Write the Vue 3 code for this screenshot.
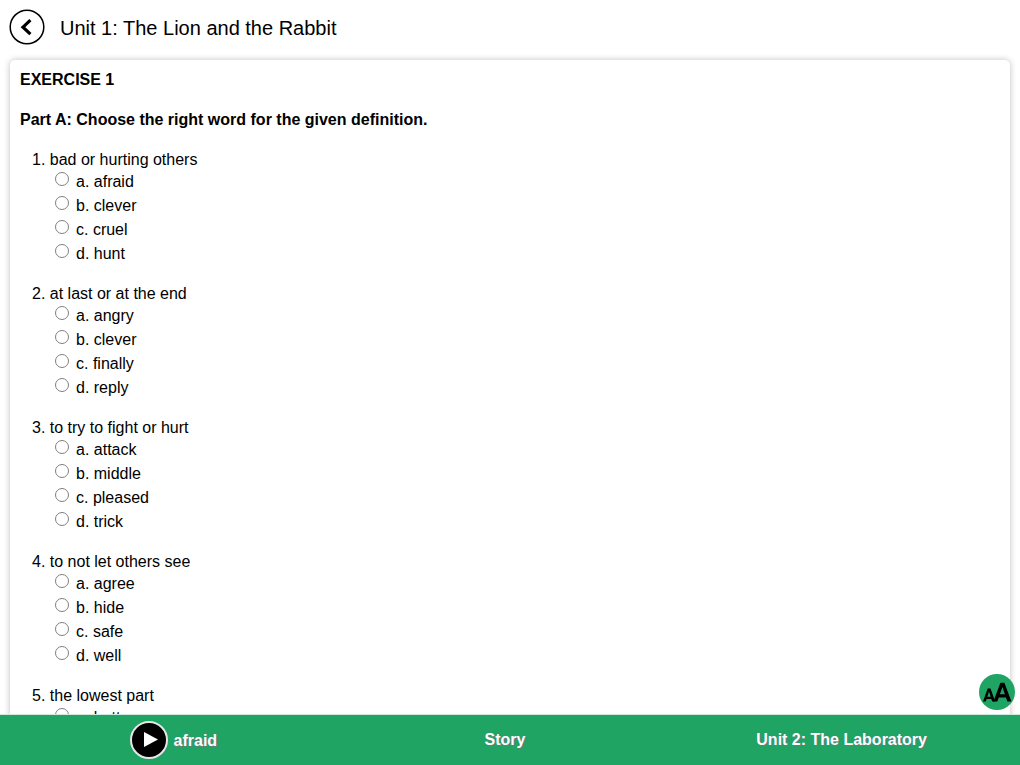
<script setup>
import { reactive } from 'vue'

const questions = [
  { text: 'bad or hurting others', options: ['afraid', 'clever', 'cruel', 'hunt'] },
  { text: 'at last or at the end', options: ['angry', 'clever', 'finally', 'reply'] },
  { text: 'to try to fight or hurt', options: ['attack', 'middle', 'pleased', 'trick'] },
  { text: 'to not let others see', options: ['agree', 'hide', 'safe', 'well'] },
  { text: 'the lowest part', options: ['bottom'] }
]
const letters = 'abcd'
const answers = reactive({})
</script>

<template>
  <div class="page">
    <header class="top">
      <button class="back" type="button" aria-label="Back">
        <svg viewBox="0 0 36 36" width="36" height="36">
          <circle cx="18" cy="18" r="16.8" fill="#fff" stroke="#000" stroke-width="1.5" />
          <path d="M21.4 11.2 14 18.2l7.4 7" fill="none" stroke="#000" stroke-width="3.2" />
        </svg>
      </button>
      <h1>Unit 1: The Lion and the Rabbit</h1>
    </header>

    <main class="content">
      <section class="card">
        <h2>EXERCISE 1</h2>
        <h3>Part A: Choose the right word for the given definition.</h3>
        <ol class="questions">
          <li v-for="(q, i) in questions" :key="i" class="question">
            <p class="prompt">{{ i + 1 }}. {{ q.text }}</p>
            <label v-for="(o, j) in q.options" :key="j" class="option">
              <input v-model="answers[i]" type="radio" :name="'q' + i" :value="o" />
              <span>{{ letters[j] }}. {{ o }}</span>
            </label>
          </li>
        </ol>
      </section>
    </main>

    <button class="size" type="button" aria-label="Text size">
      <svg viewBox="0 0 36 36" width="36" height="36">
        <circle cx="18" cy="18" r="18" fill="#1fa463" />
        <g fill="#000" fill-rule="evenodd">
          <path d="M4 27.6 8.7 14.6h2.8L16.2 27.6h-3l-.9-2.6H7.6l-.9 2.6zM8.3 22.8h3.4L10 17.6z" />
          <path d="M14.4 27.6 21.4 8.8h4l7 18.8h-4l-1.5-4.2h-7.1l-1.5 4.2zM20.9 20.2h5l-2.5-7.2z" />
        </g>
      </svg>
    </button>

    <footer class="bar">
      <a class="audio" href="#">
        <svg viewBox="0 0 38 38" width="38" height="38">
          <circle cx="19" cy="19" r="18" fill="#000" stroke="#e6e6e6" stroke-width="2" />
          <path d="M14 11v15L28 18.5z" fill="#fff" />
        </svg>
        <span>afraid</span>
      </a>
      <a href="#">Story</a>
      <a href="#">Unit 2: The Laboratory</a>
    </footer>
  </div>
</template>

<style>
body {
  margin: 0;
  background: #fff;
}
</style>

<style scoped>
.page {
  display: flex;
  flex-direction: column;
  height: 100vh;
  overflow: hidden;
  font-family: "Liberation Sans", Arial, sans-serif;
  font-size: 16px;
  line-height: 20px;
  color: #000;
}
.top {
  display: flex;
  align-items: center;
  gap: 15px;
  height: 54px;
  flex: none;
  padding: 0 9px;
}
button {
  display: block;
  padding: 0;
  border: 0;
  background: none;
  cursor: pointer;
}
svg {
  display: block;
}
h1 {
  margin: 0;
  padding-top: 2px;
  font-size: 20px;
  line-height: 24px;
  font-weight: 400;
}
.content {
  flex: 1;
  min-height: 0;
  overflow: hidden;
  padding: 6px 10px 0;
}
.card {
  padding: 10px;
  border-radius: 5px;
  background: #fff;
  box-shadow: 0 0 6px rgba(0, 0, 0, 0.25);
}
h2,
h3 {
  margin: 0 0 20px;
  font-size: 16px;
  line-height: 20px;
  font-weight: 700;
}
.questions {
  margin: 0;
  padding: 0;
  list-style: none;
}
.question {
  padding-left: 12px;
  margin-bottom: 18px;
}
.prompt {
  margin: 0;
}
.option {
  display: flex;
  align-items: center;
  gap: 7px;
  height: 24px;
  padding-left: 23px;
}
.option input {
  appearance: none;
  box-sizing: border-box;
  width: 14px;
  height: 14px;
  margin: 0 0 6px;
  border: 1px solid #808080;
  border-radius: 50%;
  background: #fff;
}
.option input:checked {
  border: 4px solid #1fa463;
}
.size {
  position: fixed;
  right: 5px;
  bottom: 55px;
}
.bar {
  display: grid;
  grid-template-columns: repeat(3, 1fr);
  align-items: center;
  flex: none;
  height: 50px;
  padding-right: 10px;
  border-top: 1px solid #cfe9dc;
  background: #1fa463;
}
.bar a {
  text-align: center;
  color: #fff;
  font-size: 16px;
  font-weight: 700;
  text-decoration: none;
  text-shadow: 1px 1px 1px #777;
}
.bar .audio {
  display: flex;
  align-items: center;
  justify-content: center;
  gap: 6px;
  padding-left: 10px;
}
.audio span {
  padding-top: 2px;
}
</style>
